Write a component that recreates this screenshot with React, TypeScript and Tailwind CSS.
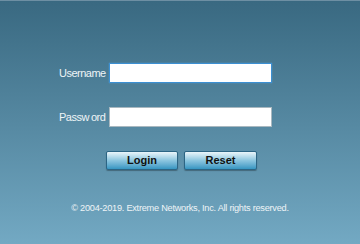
import React, { useState } from "react";

export default function App() {
  const [username, setUsername] = useState("");
  const [password, setPassword] = useState("");

  return (
    <main
      className="w-[360px] h-[244px] flex flex-col border-t border-[#6d8fa3] bg-gradient-to-b from-[#396981] to-[#73a9c3] text-white"
      style={{ fontFamily: '"Liberation Sans", Arial, sans-serif' }}
    >
      <form className="mt-[62px] ml-[59px] flex flex-col" onSubmit={(e) => e.preventDefault()}>
        {/* USERNAME */}
        <div className="flex items-center">
          <label className="w-[50px] text-[11px] tracking-[-0.5px] text-[#eef4f7]">
            Username
          </label>
          <input
            value={username}
            onChange={(e) => setUsername(e.target.value)}
            className="w-[163px] h-[20px] bg-white border border-[#3b8fd2] shadow-[0_0_1px_#5aa8e0] outline-none text-[11px] px-1 text-black"
          />
        </div>

        {/* PASSWORD */}
        <div className="flex items-center mt-[24px]">
          <label className="w-[50px] text-[11px] tracking-[-0.5px] text-[#eef4f7]">
            Passw<span className="ml-[2px]">ord</span>
          </label>
          <input
            type="password"
            value={password}
            onChange={(e) => setPassword(e.target.value)}
            className="w-[163px] h-[20px] bg-white border border-[#a9b8c0] outline-none text-[11px] px-1 text-black"
          />
        </div>

        {/* BUTTONS */}
        <div className="flex gap-[6px] mt-[24px] ml-[47px]">
          <button
            type="submit"
            className="w-[72px] h-[19px] rounded-[2px] border border-[#2c6584] bg-gradient-to-b from-[#eaf5fa] via-[#8cc6df] to-[#3596c2] text-[11px] font-bold text-[#111] shadow-[0_1px_1px_rgba(0,0,0,0.3)]"
          >
            Login
          </button>
          <button
            type="button"
            onClick={() => {
              setUsername("");
              setPassword("");
            }}
            className="w-[73px] h-[19px] rounded-[2px] border border-[#2c6584] bg-gradient-to-b from-[#eaf5fa] via-[#8cc6df] to-[#3596c2] text-[11px] font-bold text-[#111] shadow-[0_1px_1px_rgba(0,0,0,0.3)]"
          >
            Reset
          </button>
        </div>
      </form>

      {/* FOOTER */}
      <p className="self-center mt-[32px] text-[9.2px] tracking-[-0.25px] text-[#eef4f7]">
        © 2004-2019. Extreme Networks, Inc. All rights reserved.
      </p>
    </main>
  );
}
